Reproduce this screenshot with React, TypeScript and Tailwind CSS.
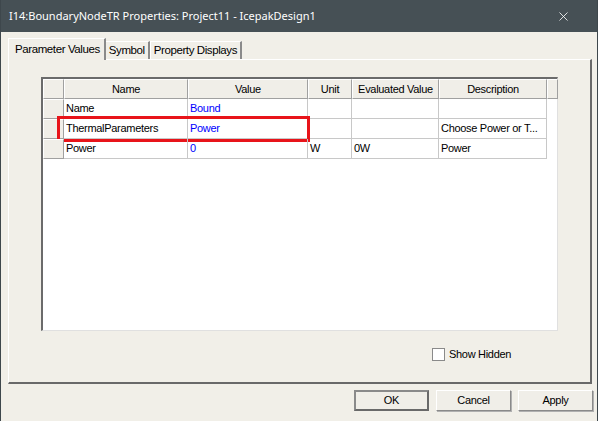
import { X } from "lucide-react";

type Row = { name: string; value: string; unit: string; evaluated: string; description: string };

const rows: Row[] = [
  { name: "Name", value: "Bound", unit: "", evaluated: "", description: "" },
  { name: "ThermalParameters", value: "Power", unit: "", evaluated: "", description: "Choose Power or T..." },
  { name: "Power", value: "0", unit: "W", evaluated: "0W", description: "Power" },
];

const columns = ["Name", "Value", "Unit", "Evaluated Value", "Description"];

const gridCols = "grid grid-cols-[21px_124px_120px_44px_87px_108px_11px]";

const headerCell =
  "h-[20px] flex items-center justify-center bg-[#f0eee8] border-t border-l border-t-white border-l-white border-r border-b border-r-[#a0a0a0] border-b-[#a0a0a0]";

const bodyCell = "h-[20px] flex items-center px-[2px] border-r border-b border-[#c8c8c8] whitespace-nowrap overflow-hidden";

const Tab = ({ label, active }: { label: string; active?: boolean }) => (
  <div
    className={
      active
        ? "relative z-10 -mb-[1px] h-[22px] pl-[6px] pr-[4px] flex items-center bg-[#f0eee8] border-t border-l border-white border-r-2 border-r-[#8a8a8a] -mr-[1px]"
        : "h-[18px] px-[3px] flex items-center border-t border-l border-white border-r-2 border-r-[#8a8a8a]"
    }
  >
    {label}
  </div>
);

const Button = ({ label, primary }: { label: string; primary?: boolean }) => (
  <button
    type="button"
    className={
      "w-[75px] h-[21px] flex items-center justify-center bg-[#f0eee8] text-black " +
      (primary
        ? "border-2 border-t-[#8a8a8a] border-l-[#8a8a8a] border-r-[#696969] border-b-[#696969]"
        : "border border-t-white border-l-white border-r-[#8a8a8a] border-b-[#8a8a8a] shadow-[1px_1px_0_#b0b0b0]")
    }
  >
    {label}
  </button>
);

export default function App() {
  return (
    <div className="w-[598px] h-[421px] overflow-hidden bg-[#f1efe8] border-l border-r border-[#3e474c] text-[11px] tracking-[-0.3px] text-black font-['Liberation_Sans',Arial,sans-serif]">
      {/* title bar */}
      <div className="h-[32px] bg-[#465055] flex items-center justify-between pl-[8px] pr-[26px] text-white">
        <span className="text-[11px] tracking-[0px] font-['Noto_Sans',sans-serif]">
          I14:BoundaryNodeTR Properties: Project11 - IcepakDesign1
        </span>
        <X size={15} strokeWidth={1.3} className="text-white" />
      </div>

      {/* tabs */}
      <div className="pl-[7px] pt-[6px]">
        <div className="flex items-end h-[21px] text-[11.5px] tracking-[-0.4px]">
          <Tab label="Parameter Values" active />
          <Tab label="Symbol" />
          <Tab label="Property Displays" />
        </div>

        {/* tab page */}
        <div className="w-[584px] h-[325px] border-t border-l border-white border-r-2 border-b-2 border-r-[#696969] border-b-[#696969] pl-[32px] pt-[17px]">
          <div className="w-[517px] h-[254px] bg-white border-l-2 border-t-2 border-l-[#6b6b6b] border-t-[#6b6b6b] border-r border-b border-r-[#e0e0e0] border-b-[#e0e0e0]">
            <div className={gridCols}>
              <div className={headerCell} />
              {columns.map((c) => (
                <div key={c} className={headerCell}>
                  {c}
                </div>
              ))}
              <div className={headerCell} />
            </div>
            {rows.map((r) => (
              <div key={r.name} className={gridCols + " relative"}>
                <div className={headerCell} />
                <div className={bodyCell}>{r.name}</div>
                <div className={bodyCell + " text-[#0000ff]"}>{r.value}</div>
                <div className={bodyCell}>{r.unit}</div>
                <div className={bodyCell}>{r.evaluated}</div>
                <div className={bodyCell}>{r.description}</div>
                {r.name === "ThermalParameters" && (
                  <div className="absolute left-[14px] top-[-3px] w-[253px] h-[26px] border-[3px] border-[#e8141a] pointer-events-none" />
                )}
              </div>
            ))}
          </div>

          <div className="flex items-center pl-[391px] pt-[15px] gap-[4px]">
            <div className="w-[13px] h-[13px] bg-white border border-[#8a8a8a]" />
            <span>Show Hidden</span>
          </div>
        </div>

        {/* dialog buttons */}
        <div className="flex pl-[346px] pt-[6px] gap-[7px]">
          <Button label="OK" primary />
          <Button label="Cancel" />
          <Button label="Apply" />
        </div>
      </div>
    </div>
  );
}
